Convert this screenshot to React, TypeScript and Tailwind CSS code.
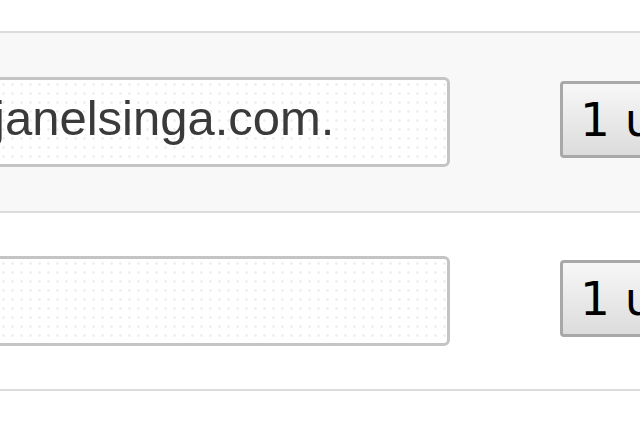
import React from "react"

const rows = [
  { value: "janelsinga.com.", bg: "bg-[#f8f8f8]", btn: "1 uur" },
  { value: "", bg: "bg-white", btn: "1 uur" },
]

export default function App() {
  return (
    <div className="w-[640px] h-[426px] overflow-hidden bg-white pt-[31px]">
      {rows.map((row, i) => (
        <div
          key={i}
          className={`flex items-center h-[180px] border-t-2 border-[#dcdcdc] ${row.bg} ${i === rows.length - 1 ? "border-b-2" : ""}`}
        >
          <input
            readOnly
            value={row.value}
            className="ml-[-40px] w-[490px] h-[90px] shrink-0 rounded-[6px] border-[3px] border-[#c4c4c4] bg-white bg-[radial-gradient(circle,#efefef_1px,transparent_1.6px)] bg-[length:9px_9px] pl-[31px] pb-[8px] font-['Liberation_Sans',Arial,sans-serif] text-[49px] text-[#3a3a3a] outline-none"
          />
          <button className="ml-[110px] mb-[6px] h-[77px] w-[200px] shrink-0 rounded-[4px] border-[3px] border-[#a8a8a8] bg-gradient-to-b from-[#f7f7f7] to-[#dcdcdc] pl-[17px] text-left font-['DejaVu_Sans',sans-serif] text-[47px] leading-none text-black">
            {row.btn}
          </button>
        </div>
      ))}
    </div>
  )
}
